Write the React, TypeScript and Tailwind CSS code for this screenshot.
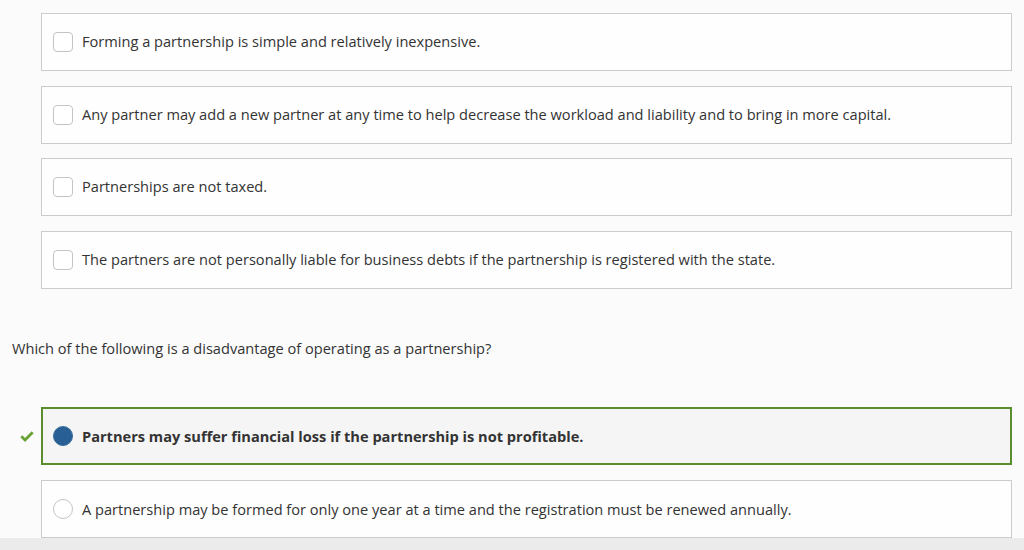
import React from "react";

type Choice = { text: string };

const multi: Choice[] = [
  { text: "Forming a partnership is simple and relatively inexpensive." },
  {
    text: "Any partner may add a new partner at any time to help decrease the workload and liability and to bring in more capital.",
  },
  { text: "Partnerships are not taxed." },
  {
    text: "The partners are not personally liable for business debts if the partnership is registered with the state.",
  },
];

function CheckBox() {
  return <span className="w-5 h-5 shrink-0 rounded-[4px] border border-[#c4c4c4] bg-white" />;
}

function Radio({ selected }: { selected?: boolean }) {
  return selected ? (
    <span className="w-5 h-5 shrink-0 rounded-full bg-[#285f95] border border-[#3a6c9c]" />
  ) : (
    <span className="w-5 h-5 shrink-0 rounded-full border border-[#c4c4c4] bg-white" />
  );
}

function CheckMark() {
  return (
    <svg width="14" height="11" viewBox="0 0 14 11" className="shrink-0">
      <path d="M1.3 5.3 L5 9 L12.7 1.3" fill="none" stroke="#67a334" strokeWidth="2.8" />
    </svg>
  );
}

export default function App() {
  return (
    <div
      className="w-[1024px] h-[550px] overflow-hidden bg-[#fbfbfb] flex flex-col text-[14.6px] text-[#333333]"
      style={{ fontFamily: '"Open Sans", "Liberation Sans", sans-serif' }}
    >
      <div className="flex-1 flex flex-col">
        <div className="pt-[13px] pl-[41px] pr-[12px] flex flex-col gap-[14.67px]">
          {multi.map((c, i) => (
            <div
              key={i}
              className="h-[58px] flex items-center gap-[9px] px-[11px] border border-[#cccccc] bg-[#fefefe]"
            >
              <CheckBox />
              <span>{c.text}</span>
            </div>
          ))}
        </div>

        <p className="mt-[49.5px] mb-[49px] pl-[12px] leading-5">
          Which of the following is a disadvantage of operating as a partnership?
        </p>

        <div className="flex items-center">
          <div className="w-[41px] flex justify-end pr-[7px]">
            <CheckMark />
          </div>
          <div className="flex-1 mr-[12px] h-[58px] flex items-center gap-[9px] px-[10px] border-2 border-[#5b8c2f] bg-[#f5f5f5]">
            <Radio selected />
            <span className="font-bold">Partners may suffer financial loss if the partnership is not profitable.</span>
          </div>
        </div>

        <div className="mt-[15px] ml-[41px] mr-[12px] h-[58px] flex items-center gap-[9px] px-[11px] border border-[#cccccc] bg-[#fefefe]">
          <Radio />
          <span>
            A partnership may be formed for only one year at a time and the registration must be renewed annually.
          </span>
        </div>
      </div>
      <div className="h-[12px] shrink-0 bg-[#ebebeb]" />
    </div>
  );
}
